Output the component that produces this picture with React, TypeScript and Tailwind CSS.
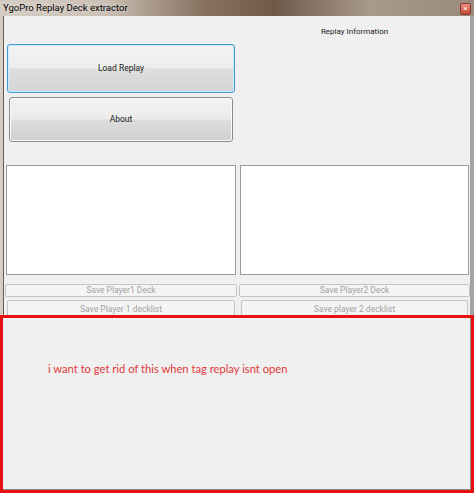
export default function App() {
  return (
    <div className="relative w-[474px] h-[493px] overflow-hidden bg-[#f0f0f0] font-['Roboto','Liberation_Sans',Arial,sans-serif]">
      {/* Title bar */}
      <div className="flex h-[16px] items-center justify-between bg-[linear-gradient(90deg,#d4ccc2_0%,#c9beb2_22%,#8a7564_42%,#6f5a4a_58%,#a8998a_78%,#9a8a7c_100%)]">
        <span className="pl-[3px] text-[9.5px] leading-none text-black [text-shadow:0_0_6px_#fff]">
          YgoPro Replay Deck extractor
        </span>
        <span className="mr-[3px] mt-[1px] flex h-[12px] w-[11px] items-center justify-center rounded-[2px] border border-[#8a3a30] bg-[linear-gradient(#e8907c,#c84634)] text-[8px] leading-none text-white">
          ×
        </span>
      </div>

      {/* Window body */}
      <div className="flex h-[477px]">
        <div className="w-[3px] bg-[#d6cec6]" />
        <div className="w-[1px] bg-[#6b5a4e]" />
        <div className="flex-1 pl-[1px]">
          <div className="flex gap-[2px]">
            {/* Left column */}
            <div className="w-[232px]">
              <div className="h-[144px] pt-[28px]">
                <button className="ml-[2px] flex h-[49px] w-[228px] items-center justify-center rounded-[3px] border border-[#3c9ad6] bg-[linear-gradient(#f3f3f3_0%,#ececec_48%,#dedede_52%,#d4d4d4_100%)] text-[8.5px] text-[#1a1a1a] shadow-[inset_0_0_0_1px_#cdeaf8]">
                  Load Replay
                </button>
                <button className="ml-[4px] mt-[4px] flex h-[45px] w-[224px] items-center justify-center rounded-[3px] border border-[#8a8a8a] bg-[linear-gradient(#f2f2f2_0%,#ebebeb_48%,#dddddd_52%,#cfcfcf_100%)] text-[8.5px] text-[#1a1a1a] shadow-[inset_0_0_0_1px_#fbfbfb]">
                  About
                </button>
              </div>
              <div className="mx-[1px] mt-[5px] h-[110px] border border-[#9a9a9a] bg-white" />
              <button className="mt-[9px] flex h-[13px] w-full items-center justify-center rounded-[2px] border border-[#c4c4c4] bg-[#f4f4f4] text-[8.5px] text-[#a3a3a3]">
                Save Player1 Deck
              </button>
              <button className="ml-[2px] mt-[3px] flex h-[19px] w-[228px] items-center justify-center rounded-[2px] border border-[#c4c4c4] bg-[#f4f4f4] text-[8.5px] text-[#a3a3a3]">
                Save Player 1 decklist
              </button>
            </div>

            {/* Right column */}
            <div className="w-[231px]">
              <div className="h-[144px] pt-[10px] text-center text-[8px] text-[#1a1a1a]">
                Replay Information
              </div>
              <div className="mx-[1px] mt-[5px] h-[110px] border border-[#9a9a9a] bg-white" />
              <button className="mt-[9px] flex h-[13px] w-full items-center justify-center rounded-[2px] border border-[#c4c4c4] bg-[#f4f4f4] text-[8.5px] text-[#a3a3a3]">
                Save Player2 Deck
              </button>
              <button className="ml-[2px] mt-[3px] flex h-[19px] w-[227px] items-center justify-center rounded-[2px] border border-[#c4c4c4] bg-[#f4f4f4] text-[8.5px] text-[#a3a3a3]">
                Save player 2 decklist
              </button>
            </div>
          </div>
        </div>
        <div className="w-[4px] bg-[#a3a3a3]" />
      </div>

      {/* Red annotation overlay */}
      <div className="absolute left-0 top-[315px] h-[178px] w-[474px] border-[3px] border-[#e81010] bg-[#f0f0f0]">
        <div className="h-full border-r border-b border-[#8c8c8c]">
          <p className="pl-[45px] pt-[43px] text-[11.2px] text-[#e0383a] font-['Lato',sans-serif]">
            i want to get rid of this when tag replay isnt open
          </p>
        </div>
      </div>
    </div>
  );
}
